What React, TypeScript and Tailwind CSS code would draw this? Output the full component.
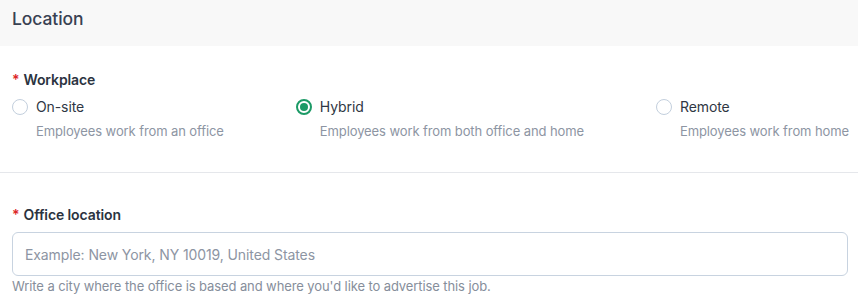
import React, { useState } from 'react';

const options = [
  { id: 'onsite', label: 'On-site', desc: 'Employees work from an office' },
  { id: 'hybrid', label: 'Hybrid', desc: 'Employees work from both office and home' },
  { id: 'remote', label: 'Remote', desc: 'Employees work from home' },
];

export default function App() {
  const [workplace, setWorkplace] = useState('hybrid');

  return (
    <div className="w-[858px] bg-white font-['Inter','Liberation_Sans',sans-serif] text-[#374151] tracking-[-0.1px]">
      {/* section header */}
      <div className="h-[46px] bg-[#f8f8f8] px-3 flex items-center">
        <h2 className="text-[17.5px] font-medium text-[#384152] leading-none -mt-[8px]">Location</h2>
      </div>

      {/* workplace */}
      <div className="pl-3 pr-[9px] pt-[24px] pb-[31px]">
        <div className="text-sm font-semibold text-[#2b3340] leading-5">
          <span className="text-[#dc2626] mr-1">*</span>Workplace
        </div>
        <div className="mt-[7px] flex justify-between">
          {options.map((o) => {
            const checked = workplace === o.id;
            return (
              <label key={o.id} className="flex flex-col cursor-pointer" onClick={() => setWorkplace(o.id)}>
                <span className="flex items-center gap-2 h-5">
                  {checked ? (
                    <span className="w-4 h-4 rounded-full border-2 border-[#1c9a66] flex items-center justify-center">
                      <span className="w-2 h-2 rounded-full bg-[#1c9a66]" />
                    </span>
                  ) : (
                    <span className="w-4 h-4 rounded-full border border-[#c3cfdd]" />
                  )}
                  <span className="text-sm text-[#2f3744]">{o.label}</span>
                </span>
                <span className="pl-6 mt-[4px] text-[13px] leading-5 text-[#8d95a3]">{o.desc}</span>
              </label>
            );
          })}
        </div>
      </div>

      <div className="h-px bg-[#e5e7eb]" />

      {/* office location */}
      <div className="pl-3 pr-[10px] pt-[32px]">
        <div className="text-sm font-semibold text-[#2b3340] leading-5">
          <span className="text-[#dc2626] mr-1">*</span>Office location
        </div>
        <input
          className="mt-[7px] block w-full h-[44px] rounded-md border border-[#c8d3e0] px-3 text-sm text-[#374151] placeholder:text-[#8d95a3] outline-none"
          placeholder="Example: New York, NY 10019, United States"
        />
        <p className="mt-0 text-[13px] leading-5 text-[#868e9b]">
          Write a city where the office is based and where you'd like to advertise this job.
        </p>
      </div>
    </div>
  );
}
